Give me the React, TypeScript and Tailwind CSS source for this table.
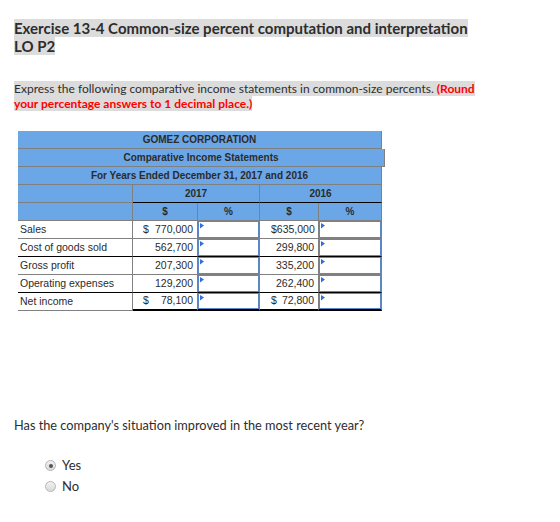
import React from 'react';

type Row = {
  label: string;
  a17: string;
  a16: string;
  dollar: boolean;
  line: 'grey' | 'black' | 'last';
};

const rows: Row[] = [
  { label: 'Sales', a17: '770,000', a16: '635,000', dollar: true, line: 'grey' },
  { label: 'Cost of goods sold', a17: '562,700', a16: '299,800', dollar: false, line: 'black' },
  { label: 'Gross profit', a17: '207,300', a16: '335,200', dollar: false, line: 'grey' },
  { label: 'Operating expenses', a17: '129,200', a16: '262,400', dollar: false, line: 'black' },
  { label: 'Net income', a17: '78,100', a16: '72,800', dollar: true, line: 'last' },
];

function Flag() {
  return (
    <svg className="absolute left-[1px] top-[1px]" width="4" height="6" viewBox="0 0 4 6">
      <polygon points="0,0 4,2.5 0,5.5" fill="#2f6fd6" />
    </svg>
  );
}

function PercentInput() {
  return (
    <div className="relative h-full w-full border border-[#5b87c6] bg-white">
      <Flag />
    </div>
  );
}

function Amount({ value, dollar, padLeft }: { value: string; dollar: boolean; padLeft: string }) {
  return (
    <div className={`flex h-full items-center ${dollar ? 'justify-between' : 'justify-end'} ${padLeft} pr-[4px]`}>
      {dollar && <span>$</span>}
      <span>{value}</span>
    </div>
  );
}

function IncomeTable() {
  const head = 'flex h-[18px] items-center justify-center border-b border-r border-[#808080] bg-[#6ba6e6] text-[10px] font-bold';
  return (
    <div className="ml-[18px] w-[367px] text-[10.5px] text-[#2b2b2b] [font-family:'Liberation_Sans',Arial,sans-serif]">
      <div className={`${head} w-[364px]`}>GOMEZ CORPORATION</div>
      <div className={`${head} w-[367px]`}>Comparative Income Statements</div>
      <div className={`${head} w-[364px]`}>For Years Ended December 31, 2017 and 2016</div>

      <div className="grid w-[364px] grid-cols-[115px_65px_62px_59px_63px] bg-[#6ba6e6] text-[10px] font-bold">
        <div className="h-[18px] border-b border-r border-[#808080]" />
        <div className="col-span-2 flex h-[18px] items-center justify-center border-b border-r border-b-black border-r-[#808080]">2017</div>
        <div className="col-span-2 flex h-[18px] items-center justify-center border-b border-r border-b-black border-r-[#808080]">2016</div>
        <div className="h-[18px] border-b border-r border-[#808080]" />
        <div className="flex h-[18px] items-center justify-center border-b border-r border-[#808080]">$</div>
        <div className="flex h-[18px] items-center justify-center border-b border-r border-[#808080]">%</div>
        <div className="flex h-[18px] items-center justify-center border-b border-r border-[#808080]">$</div>
        <div className="flex h-[18px] items-center justify-center border-b border-r border-[#808080]">%</div>
      </div>

      <div className="grid w-[364px] grid-cols-[115px_65px_62px_59px_63px] bg-white">
        {rows.map((r) => {
          const b =
            r.line === 'black'
              ? 'border-b border-b-black'
              : r.line === 'grey'
                ? 'border-b border-b-[#808080]'
                : 'border-b-2 border-b-black';
          const labelB = r.line === 'black' ? 'border-b border-b-black' : 'border-b border-b-[#808080]';
          return (
            <React.Fragment key={r.label}>
              <div className={`flex h-[18px] items-center border-r border-r-[#808080] pl-[2px] ${labelB}`}>{r.label}</div>
              <div className={`h-[18px] border-r border-r-[#808080] ${b}`}>
                <Amount value={r.a17} dollar={r.dollar} padLeft="pl-[10px]" />
              </div>
              <div className={`h-[18px] border-r border-r-[#808080] ${b}`}>
                <PercentInput />
              </div>
              <div className={`h-[18px] border-r border-r-[#808080] ${b}`}>
                <Amount value={r.a16} dollar={r.dollar} padLeft="pl-[11px]" />
              </div>
              <div className={`h-[18px] border-r border-r-[#808080] ${b}`}>
                <PercentInput />
              </div>
            </React.Fragment>
          );
        })}
      </div>
    </div>
  );
}

function Radio({ label, checked }: { label: string; checked?: boolean }) {
  return (
    <div className="flex h-[21px] items-center">
      <span className="flex h-[11px] w-[11px] items-center justify-center rounded-full border border-[#b5b5b5] bg-gradient-to-b from-[#f2f2f2] to-[#d9d9d9]">
        {checked && <span className="h-[4px] w-[4px] rounded-full bg-[#555]" />}
      </span>
      <span className="ml-[6px]">{label}</span>
    </div>
  );
}

export default function App() {
  return (
    <div className="h-[522px] w-[560px] bg-white pl-[14px] pt-[19px] text-[#2d2d2d] [font-family:Lato,'Open_Sans',sans-serif]">
      <h1 className="text-[15px] font-bold leading-[18px]">
        <span className="bg-[#dcdcdc]">Exercise 13-4 Common-size percent computation and interpretation </span>
        <br />
        <span className="bg-[#dcdcdc]">LO P2 </span>
      </h1>

      <p className="mt-[26px] text-[12px] leading-[15px]">
        <span className="bg-[#dcdcdc]">
          Express the following comparative income statements in common-size percents.{' '}
          <strong className="text-[#ff0000]">(Round</strong>
        </span>
        <br />
        <span className="bg-[#dcdcdc]">
          <strong className="text-[#ff0000]">your percentage answers to 1 decimal place.)</strong>
        </span>
      </p>

      <div className="-ml-[14px] mt-[20px]">
        <IncomeTable />
      </div>

      <p className="mt-[105px] text-[12.75px] leading-[18px]">Has the company's situation improved in the most recent year?</p>

      <div className="ml-[31px] mt-[21px] text-[13px]">
        <Radio label="Yes" checked />
        <Radio label="No" />
      </div>
    </div>
  );
}
